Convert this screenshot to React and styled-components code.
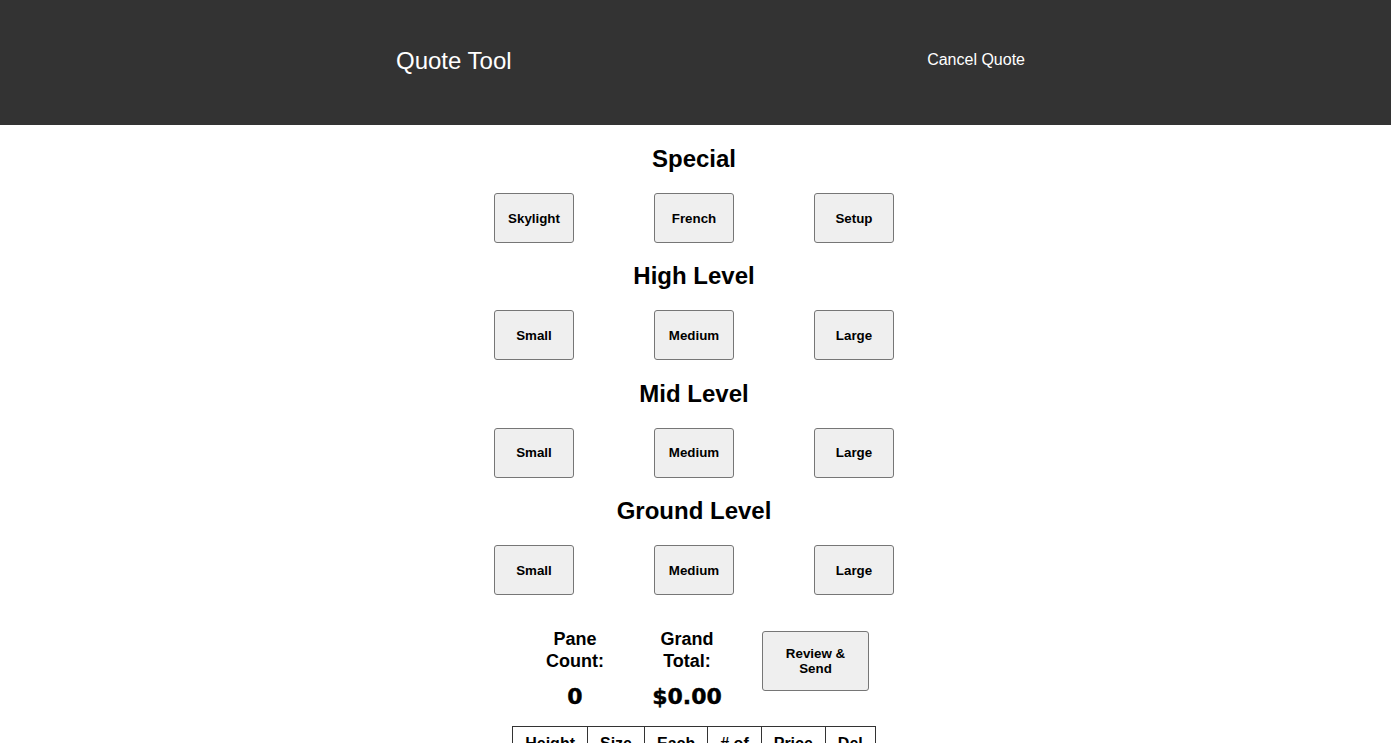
import React from "react";
import styled, { createGlobalStyle } from "styled-components";

const Global = createGlobalStyle`
  html, body { margin: 0; padding: 0; background: #fff; }
  body { font-family: "Liberation Sans", Arial, sans-serif; color: #000; }
  ::-webkit-scrollbar { display: none; }
`;

const Header = styled.header`
  height: 125px;
  box-sizing: border-box;
  background: #333333;
  display: flex;
  align-items: center;
  justify-content: space-between;
  padding: 0 366px 5px 396px;
  color: #fff;
`;

const Title = styled.div`
  font-size: 24px;
  line-height: 28px;
  margin-top: 2px;
`;

const CancelLink = styled.div`
  font-size: 16px;
  line-height: 20px;
`;

const Main = styled.main`
  display: flex;
  flex-direction: column;
  align-items: center;
  padding: 20px 3px 0 0;
`;

const Section = styled.section`
  display: flex;
  flex-direction: column;
  align-items: center;
  margin-bottom: 19.4px;
`;

const Heading = styled.h2`
  margin: 0 0 20px;
  font-size: 24px;
  line-height: 28px;
  font-weight: bold;
`;

const ButtonRow = styled.div`
  display: flex;
  gap: 80px;
`;

const Btn = styled.button`
  width: ${(p) => p.$w || 80}px;
  height: ${(p) => p.$h || 50}px;
  background: #efefef;
  border: 1px solid #767676;
  border-radius: 3px;
  font-family: "Liberation Sans", Arial, sans-serif;
  font-size: 13.333px;
  font-weight: bold;
  color: #000;
  padding: 0 12px;
  line-height: 15px;
  box-sizing: border-box;
`;

const StatsRow = styled.div`
  display: flex;
  align-items: flex-start;
  margin-top: 13px;
  margin-left: 11px;
`;

const Stat = styled.div`
  width: 90px;
  display: flex;
  flex-direction: column;
  align-items: center;
  text-align: center;
  margin-right: ${(p) => p.$mr}px;
`;

const StatLabel = styled.div`
  font-size: 18px;
  line-height: 22px;
  font-weight: bold;
`;

const StatValue = styled.div`
  margin-top: 11px;
  font-family: "DejaVu Sans", sans-serif;
  font-size: 22px;
  line-height: 28px;
  font-weight: bold;
  -webkit-text-stroke: 0.4px #000;
`;

const ReviewWrap = styled.div`
  margin-top: 3px;
`;

const Table = styled.table`
  margin-top: 15px;
  border-collapse: collapse;
  border: 1px solid #333;
`;

const Th = styled.th`
  border: 1px solid #333;
  padding: 8px 12px;
  font-size: 16px;
  line-height: 18px;
  font-weight: bold;
`;

const sections = [
  { title: "Special", items: ["Skylight", "French", "Setup"] },
  { title: "High Level", items: ["Small", "Medium", "Large"] },
  { title: "Mid Level", items: ["Small", "Medium", "Large"] },
  { title: "Ground Level", items: ["Small", "Medium", "Large"] },
];

export default function App() {
  return (
    <>
      <Global />
      <Header>
        <Title>Quote Tool</Title>
        <CancelLink>Cancel Quote</CancelLink>
      </Header>
      <Main>
        {sections.map((s) => (
          <Section key={s.title}>
            <Heading>{s.title}</Heading>
            <ButtonRow>
              {s.items.map((it) => (
                <Btn key={it}>{it}</Btn>
              ))}
            </ButtonRow>
          </Section>
        ))}
        <StatsRow>
          <Stat $mr={22}>
            <StatLabel>Pane<br />Count:</StatLabel>
            <StatValue>0</StatValue>
          </Stat>
          <Stat $mr={30}>
            <StatLabel>Grand<br />Total:</StatLabel>
            <StatValue>$0.00</StatValue>
          </Stat>
          <ReviewWrap>
            <Btn $w={107} $h={60}>Review &amp; Send</Btn>
          </ReviewWrap>
        </StatsRow>
        <Table>
          <thead>
            <tr>
              <Th>Height</Th>
              <Th>Size</Th>
              <Th>Each</Th>
              <Th># of</Th>
              <Th>Price</Th>
              <Th>Del</Th>
            </tr>
          </thead>
        </Table>
      </Main>
    </>
  );
}
